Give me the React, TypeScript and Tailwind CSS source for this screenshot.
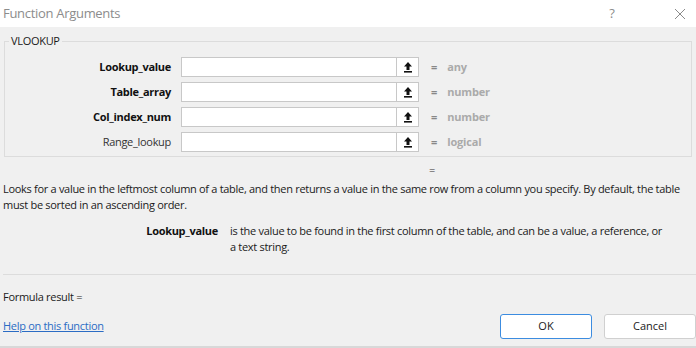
import React from 'react';

const args = [
    { name: 'Lookup_value', bold: true, type: 'any' },
    { name: 'Table_array', bold: true, type: 'number' },
    { name: 'Col_index_num', bold: true, type: 'number' },
    { name: 'Range_lookup', bold: false, type: 'logical' },
];

const RefIcon = () => (
    <svg width="10" height="12" viewBox="0 0 10 12">
        <path d="M5 1 L9 5.5 L6.5 5.5 L6.5 9 L3.5 9 L3.5 5.5 L1 5.5 Z" fill="#111" />
        <rect x="1" y="10" width="8" height="1.6" fill="#111" />
    </svg>
);

export default function App() {
    return (
        <div className="w-[696px] h-[348px] bg-[#f0f0f0] text-[12px] text-[#1a1a1a] overflow-hidden flex flex-col" style={{ fontFamily: '"Open Sans", "Noto Sans", sans-serif' }}>
            {/* title bar */}
            <div className="h-[27px] bg-white flex items-center shrink-0">
                <div className="pl-[3px] text-[13px] text-[#8c8c8c] tracking-[-0.3px] flex-1">Function Arguments</div>
                <div className="w-[20px] text-center text-[13px] text-[#8c8c8c] mr-[48px]">?</div>
                <div className="w-[20px] mr-[6px] flex justify-center">
                    <svg width="12" height="12" viewBox="0 0 12 12">
                        <path d="M1 1 L11 11 M11 1 L1 11" stroke="#8a8a8a" strokeWidth="1" />
                    </svg>
                </div>
            </div>

            {/* group box */}
            <div className="relative mt-[14px] mx-[4px] h-[116px] border border-[#dcdcdc] shrink-0">
                <div className="absolute -top-[9px] left-[4px] px-[2px] bg-[#f0f0f0] text-[11px] leading-[16px] tracking-[-0.3px]">VLOOKUP</div>
                <div className="pt-[15px] flex flex-col gap-[5px]">
                    {args.map(a => (
                        <div key={a.name} className="flex items-center h-[20px]">
                            <div className={`w-[166px] text-right text-[11px] tracking-[-0.3px] ${a.bold ? 'font-bold text-[#111]' : 'text-[#333]'}`}>{a.name}</div>
                            <div className="ml-[10px] w-[216px] h-[20px] bg-white border border-[#c8c8c8]" />
                            <div className="w-[22px] h-[20px] bg-white border border-[#c8c8c8] border-l-0 flex items-center justify-center">
                                <RefIcon />
                            </div>
                            <div className="ml-[12px] text-[11px] font-bold text-[#888]">=</div>
                            <div className="ml-[10px] text-[11px] font-bold text-[#aaa] tracking-[-0.2px]">{a.type}</div>
                        </div>
                    ))}
                </div>
            </div>

            <div className="pl-[429px] mt-[6px] text-[11px] text-[#333] leading-[14px]">=</div>

            <div className="pl-[3px] pr-[6px] mt-[4px] text-[11px] leading-[16px] tracking-[-0.3px] text-[#1a1a1a]">
                Looks for a value in the leftmost column of a table, and then returns a value in the same row from a column you specify. By default, the table must be sorted in an ascending order.
            </div>

            <div className="flex mt-[10px] text-[11px] leading-[16px] tracking-[-0.3px]">
                <div className="w-[218px] text-right font-bold text-[#111]">Lookup_value</div>
                <div className="ml-[12px] w-[440px] text-[#1a1a1a]">is the value to be found in the first column of the table, and can be a value, a reference, or a text string.</div>
            </div>

            <div className="mt-[19px] ml-[3px] border-t border-[#dcdcdc] shrink-0" />

            <div className="pl-[3px] mt-[14px] text-[11px] leading-[16px] tracking-[-0.3px]">Formula result =</div>

            <div className="flex items-center mt-[9px]">
                <a href="#" className="pl-[3px] text-[11px] text-[#2b6cc4] underline tracking-[-0.3px] flex-1">Help on this function</a>
                <button className="w-[92px] h-[25px] bg-white border border-[#3c8ce0] rounded-[3px] text-[11px] text-[#1a1a1a]">OK</button>
                <button className="ml-[12px] w-[92px] h-[25px] bg-white border border-[#d0d0d0] rounded-[3px] text-[11px] text-[#1a1a1a]">Cancel</button>
            </div>
            <div className="mt-auto h-[2px] bg-[#d8d8d8]" />
        </div>
    );
}
